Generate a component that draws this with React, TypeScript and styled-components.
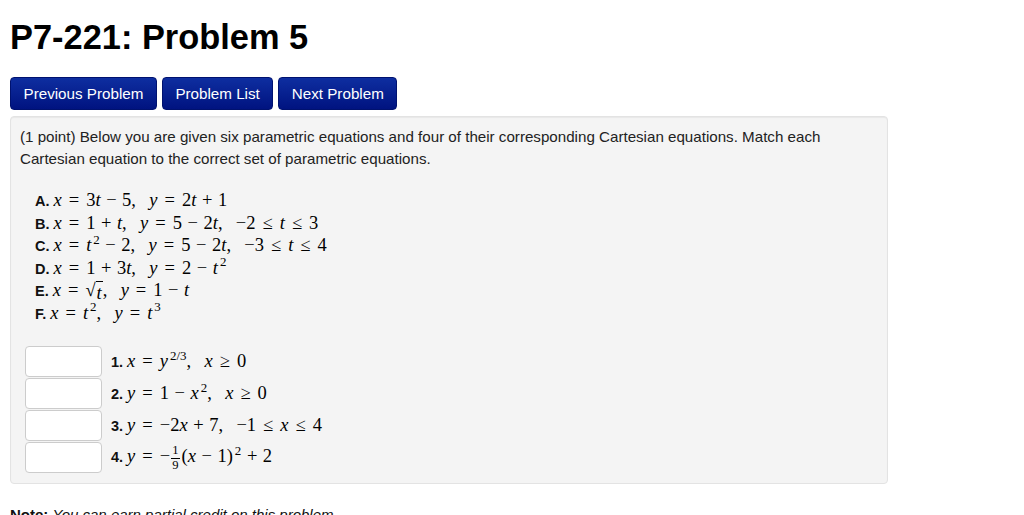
import React from 'react';
import styled, { createGlobalStyle } from 'styled-components';

const GlobalStyle = createGlobalStyle`
  body {
    margin: 0;
    background: #fff;
    font-family: "Liberation Sans", Arial, Helvetica, sans-serif;
    color: #333;
  }
`;

const Page = styled.div`
  padding: 17px 10px 0;
  width: 878px;
`;

const Title = styled.h1`
  margin: 0;
  font-size: 34.4px;
  line-height: 41px;
  font-weight: bold;
  color: #000;
`;

const Nav = styled.div`
  display: flex;
  gap: 5px;
  margin-top: 19px;
`;

const NavButton = styled.button`
  height: 33px;
  padding: 0 12.5px;
  border: 1px solid #00126f;
  border-radius: 4px;
  background: linear-gradient(#0e2ea0, #001380);
  color: #fff;
  font-family: "Liberation Sans", Arial, sans-serif;
  font-size: 15.2px;
  cursor: pointer;
`;

const Well = styled.div`
  box-sizing: border-box;
  margin-top: 6px;
  padding: 9px 9px 10px;
  background: #f4f4f4;
  border: 1px solid #e3e3e3;
  border-radius: 4px;
  box-shadow: inset 0 1px 1px rgba(0, 0, 0, 0.05);
`;

const Intro = styled.p`
  margin: 0;
  font-size: 15.15px;
  line-height: 22px;
  color: #222;
`;

const ChoiceList = styled.div`
  margin: 19px 0 0 15px;
  display: flex;
  flex-direction: column;
`;

const ChoiceRow = styled.div`
  display: flex;
  align-items: baseline;
  height: 22.5px;
  line-height: 22.5px;
  white-space: nowrap;
`;

const Label = styled.b`
  font-family: "Liberation Sans", Arial, sans-serif;
  font-size: 14.5px;
  font-weight: bold;
  color: #111;
  margin-right: 4px;
`;

const MathText = styled.span`
  font-family: "Liberation Serif", "Times New Roman", serif;
  font-size: 18.5px;
  color: #000;
`;

const V = styled.i`
  font-style: italic;
`;

const Rel = styled.span`
  margin: 0 0.38em;
`;

const Bin = styled.span`
  margin: 0 0.3em;
`;

const Sep = styled.span`
  margin-right: 0.72em;
`;

const Sup = styled.sup`
  font-size: 0.7em;
  line-height: 0;
  vertical-align: 0.55em;
  margin-left: 2px;
`;

const Sqrt = styled.span`
  display: inline-flex;
  align-items: flex-start;
`;

const Radicand = styled.span`
  border-top: 1px solid #000;
  line-height: 1;
  margin-top: 2px;
  padding: 2px 1px 0;
`;

const Frac = styled.span`
  display: inline-flex;
  flex-direction: column;
  align-items: center;
  font-size: 0.68em;
  line-height: 1;
  vertical-align: 0.62em;
  margin: 0 2px 0 1px;
`;

const Num = styled.span`
  border-bottom: 1px solid #000;
  padding: 0 1px 1px;
`;

const AnswerList = styled.div`
  margin-top: 22px;
  padding-left: 5px;
  display: flex;
  flex-direction: column;
  gap: 1px;
`;

const AnswerRow = styled.div`
  display: flex;
  align-items: center;
  gap: 9px;
  height: 31px;
  white-space: nowrap;
`;

const AnswerInput = styled.input`
  box-sizing: border-box;
  width: 77px;
  height: 31px;
  border: 1px solid #ccc;
  border-radius: 4px;
  background: #fff;
`;

const Note = styled.p`
  margin: 20px 0 0;
  font-size: 15px;
  line-height: 22px;
  color: #111;
`;

const eq = (a: React.ReactNode) => <MathText>{a}</MathText>;

const choices: { label: string; math: React.ReactNode }[] = [
  {
    label: 'A.',
    math: eq(
      <>
        <V>x</V><Rel>=</Rel>3<V>t</V><Bin>−</Bin>5,<Sep />
        <V>y</V><Rel>=</Rel>2<V>t</V><Bin>+</Bin>1
      </>,
    ),
  },
  {
    label: 'B.',
    math: eq(
      <>
        <V>x</V><Rel>=</Rel>1<Bin>+</Bin><V>t</V>,<Sep />
        <V>y</V><Rel>=</Rel>5<Bin>−</Bin>2<V>t</V>,<Sep />
        −2<Rel>≤</Rel><V>t</V><Rel>≤</Rel>3
      </>,
    ),
  },
  {
    label: 'C.',
    math: eq(
      <>
        <V>x</V><Rel>=</Rel><V>t</V><Sup>2</Sup><Bin>−</Bin>2,<Sep />
        <V>y</V><Rel>=</Rel>5<Bin>−</Bin>2<V>t</V>,<Sep />
        −3<Rel>≤</Rel><V>t</V><Rel>≤</Rel>4
      </>,
    ),
  },
  {
    label: 'D.',
    math: eq(
      <>
        <V>x</V><Rel>=</Rel>1<Bin>+</Bin>3<V>t</V>,<Sep />
        <V>y</V><Rel>=</Rel>2<Bin>−</Bin><V>t</V><Sup>2</Sup>
      </>,
    ),
  },
  {
    label: 'E.',
    math: eq(
      <>
        <V>x</V><Rel>=</Rel>
        <Sqrt>
          √<Radicand><V>t</V></Radicand>
        </Sqrt>
        ,<Sep />
        <V>y</V><Rel>=</Rel>1<Bin>−</Bin><V>t</V>
      </>,
    ),
  },
  {
    label: 'F.',
    math: eq(
      <>
        <V>x</V><Rel>=</Rel><V>t</V><Sup>2</Sup>,<Sep />
        <V>y</V><Rel>=</Rel><V>t</V><Sup>3</Sup>
      </>,
    ),
  },
];

const answers: { label: string; math: React.ReactNode }[] = [
  {
    label: '1.',
    math: eq(
      <>
        <V>x</V><Rel>=</Rel><V>y</V><Sup>2/3</Sup>,<Sep />
        <V>x</V><Rel>≥</Rel>0
      </>,
    ),
  },
  {
    label: '2.',
    math: eq(
      <>
        <V>y</V><Rel>=</Rel>1<Bin>−</Bin><V>x</V><Sup>2</Sup>,<Sep />
        <V>x</V><Rel>≥</Rel>0
      </>,
    ),
  },
  {
    label: '3.',
    math: eq(
      <>
        <V>y</V><Rel>=</Rel>−2<V>x</V><Bin>+</Bin>7,<Sep />
        −1<Rel>≤</Rel><V>x</V><Rel>≤</Rel>4
      </>,
    ),
  },
  {
    label: '4.',
    math: eq(
      <>
        <V>y</V><Rel>=</Rel>−
        <Frac>
          <Num>1</Num>
          <span>9</span>
        </Frac>
        (<V>x</V><Bin>−</Bin>1)<Sup>2</Sup><Bin>+</Bin>2
      </>,
    ),
  },
];

export default function App() {
  return (
    <Page>
      <GlobalStyle />
      <Title>P7-221: Problem 5</Title>
      <Nav>
        <NavButton>Previous Problem</NavButton>
        <NavButton>Problem List</NavButton>
        <NavButton>Next Problem</NavButton>
      </Nav>
      <Well>
        <Intro>
          (1 point) Below you are given six parametric equations and four of their corresponding
          Cartesian equations. Match each Cartesian equation to the correct set of parametric
          equations.
        </Intro>
        <ChoiceList>
          {choices.map((c) => (
            <ChoiceRow key={c.label}>
              <Label>{c.label}</Label>
              {c.math}
            </ChoiceRow>
          ))}
        </ChoiceList>
        <AnswerList>
          {answers.map((a) => (
            <AnswerRow key={a.label}>
              <AnswerInput type="text" aria-label={`answer ${a.label}`} />
              <span>
                <Label>{a.label}</Label>
                {a.math}
              </span>
            </AnswerRow>
          ))}
        </AnswerList>
      </Well>
      <Note>
        <b>Note:</b> <i>You can earn partial credit on this problem.</i>
      </Note>
    </Page>
  );
}
